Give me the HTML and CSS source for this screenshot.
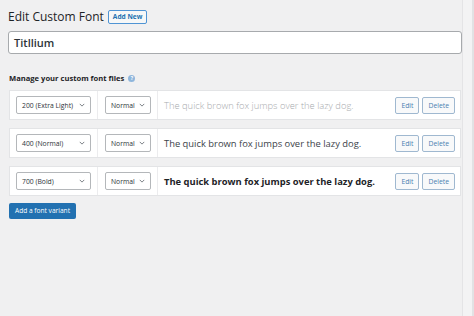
FILE: index.html
```html
<!DOCTYPE html>
<html>
<head>
<meta charset="utf-8">
<link rel="stylesheet" href="styles.css">
</head>
<body>
<div class="page">
  <main class="main">
    <div class="head">
      <h1 class="title">Edit Custom Font</h1>
      <a class="btn-outline">Add New</a>
    </div>
    <div class="name-input">Titllium</div>
    <h2 class="section">Manage your custom font files <span class="help">?</span></h2>
    <div class="rows">
      <div class="row">
        <div class="cell sel-cell"><span class="select w1">200 (Extra Light)<svg class="chev" viewBox="0 0 8 5"><path d="M1 1l3 3 3-3" fill="none" stroke="#50575e" stroke-width="1"/></svg></span></div>
        <div class="cell sel-cell"><span class="select w2">Normal<svg class="chev" viewBox="0 0 8 5"><path d="M1 1l3 3 3-3" fill="none" stroke="#50575e" stroke-width="1"/></svg></span></div>
        <div class="cell sample light">The quick brown fox jumps over the lazy dog.</div>
        <div class="actions"><a class="btn-sm">Edit</a><a class="btn-sm">Delete</a></div>
      </div>
      <div class="row">
        <div class="cell sel-cell"><span class="select w1">400 (Normal)<svg class="chev" viewBox="0 0 8 5"><path d="M1 1l3 3 3-3" fill="none" stroke="#50575e" stroke-width="1"/></svg></span></div>
        <div class="cell sel-cell"><span class="select w2">Normal<svg class="chev" viewBox="0 0 8 5"><path d="M1 1l3 3 3-3" fill="none" stroke="#50575e" stroke-width="1"/></svg></span></div>
        <div class="cell sample">The quick brown fox jumps over the lazy dog.</div>
        <div class="actions"><a class="btn-sm">Edit</a><a class="btn-sm">Delete</a></div>
      </div>
      <div class="row">
        <div class="cell sel-cell"><span class="select w1">700 (Bold)<svg class="chev" viewBox="0 0 8 5"><path d="M1 1l3 3 3-3" fill="none" stroke="#50575e" stroke-width="1"/></svg></span></div>
        <div class="cell sel-cell"><span class="select w2">Normal<svg class="chev" viewBox="0 0 8 5"><path d="M1 1l3 3 3-3" fill="none" stroke="#50575e" stroke-width="1"/></svg></span></div>
        <div class="cell sample bold">The quick brown fox jumps over the lazy dog.</div>
        <div class="actions"><a class="btn-sm">Edit</a><a class="btn-sm">Delete</a></div>
      </div>
    </div>
    <a class="btn-primary">Add a font variant</a>
  </main>
  <aside class="side"><div class="scroll"></div></aside>
</div>
</body>
</html>
```
FILE: styles.css
```css
* { box-sizing: border-box; }
html, body { margin: 0; height: 100%; }
body {
  background: #f0f0f1;
  font-family: "Open Sans", "Noto Sans", sans-serif;
  color: #1d2327;
}
.page { display: flex; height: 316px; }
.main { flex: 1; min-width: 0; padding: 8px 0 0 8px; }
.side {
  width: 12px; background: #f3f3f4; border-left: 1px solid #e4e4e6;
  display: flex; justify-content: flex-end;
}
.scroll { width: 2px; height: 100%; background: #e2e2e4; }
.head { display: flex; align-items: center; gap: 4px; height: 18px; }
.title { margin: 0; font-size: 12px; font-weight: 400; color: #1d2327; line-height: 18px; }
.btn-outline {
  font-size: 6.6px; font-weight: 700; color: #2271b1;
  border: 1px solid #4f94d4; border-radius: 2px;
  padding: 0 4px; line-height: 12px; background: #f6f7f7;
}
.name-input {
  margin-top: 5px; height: 23px; background: #fff;
  border: 1px solid #a7aaad; border-radius: 3px;
  font-size: 11px; font-weight: 600; padding: 0 5px; line-height: 21px;
  color: #2c3338;
}
.section {
  margin: 19px 0 0 1px; font-size: 7.6px; font-weight: 700; line-height: 10px;
  display: flex; align-items: center; gap: 4px; color: #1d2327;
}
.help {
  width: 7px; height: 7px; border-radius: 50%; background: #8fb6dc;
  color: #fff; font-size: 5px; display: inline-flex; align-items: center; justify-content: center;
}
.rows { margin-top: 7px; margin-left: 1px; margin-right: 1px; display: flex; flex-direction: column; gap: 8px; }
.row {
  display: flex; align-items: stretch; height: 30px;
  background: #fff; border: 1px solid #e3e4e6;
}
.cell { display: flex; align-items: center; }
.sel-cell { padding: 0 6px 0 6px; border-right: 1px solid #ececee; }
.sel-cell + .sel-cell { padding: 0 6px 0 7px; }
.select {
  display: flex; align-items: center; justify-content: space-between;
  height: 18px; border: 1px solid #b4b7ba; border-radius: 2px;
  font-size: 6.8px; color: #2c3338; padding: 0 5px 0 5px; background: #fff;
  white-space: nowrap;
}
.w1 { width: 75px; }
.w2 { width: 46px; }
.chev { width: 6px; height: 4px; margin-left: 3px; flex: none; }
.sample { flex: 1; min-width: 0; padding-left: 6px; font-size: 9.4px; color: #3c434a; white-space: nowrap; overflow: hidden; }
.sample.light { color: #a7aaad; font-weight: 300; }
.sample.bold { font-weight: 700; color: #1d2327; }
.actions { display: flex; align-items: center; gap: 3px; padding-right: 5px; }
.btn-sm {
  font-size: 6.8px; color: #4a7fb0; border: 1px solid #9fb8d0;
  border-radius: 2px; height: 17px; display: inline-flex; align-items: center;
  padding: 0 5px; background: #f8f9fa;
}
.btn-primary {
  display: inline-block; margin-top: 6px; margin-left: 1px;
  background: #2271b1; color: #fff; font-size: 6.6px;
  border-radius: 2px; height: 16px; line-height: 16px; padding: 0 6px;
}
```
